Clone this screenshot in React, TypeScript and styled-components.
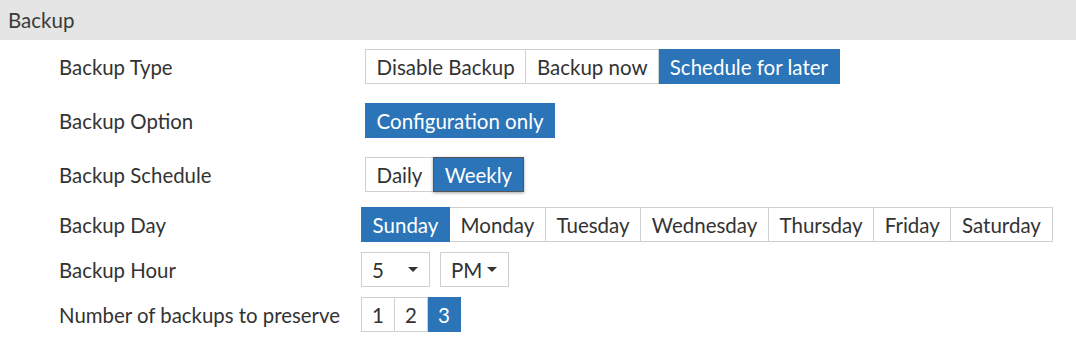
import React from 'react';
import styled, { createGlobalStyle } from 'styled-components';

const GlobalStyle = createGlobalStyle`
  body {
    margin: 0;
    background: #fff;
    font-family: Lato, "Open Sans", sans-serif;
    color: #333;
  }
`;

const Header = styled.div`
  height: 40px;
  line-height: 40px;
  padding-left: 8px;
  background: #e5e5e5;
  font-size: 20.5px;
  color: #3a3a3a;
`;

const Form = styled.div`
  padding: 5px 0 0 59px;
`;

const Row = styled.div`
  display: flex;
  align-items: center;
  margin-bottom: 10px;
`;

const Label = styled.div`
  width: 302px;
  font-size: 20.4px;
  color: #333;
`;

const Group = styled.div<{ inset?: boolean }>`
  display: flex;
  margin: ${({ inset }) => (inset ? '4px 4px 5px' : '0')};
`;

const Option = styled.div<{ active?: boolean; focused?: boolean }>`
  height: 35px;
  box-sizing: border-box;
  padding: 0 10.6px;
  display: flex;
  align-items: center;
  font-size: 20.5px;
  color: #333;
  background: #fff;
  border: 1px solid #d0d0d0;
  border-left-width: 0;
  white-space: nowrap;

  &:first-child {
    border-left-width: 1px;
  }

  ${({ active }) => active && `
    background: #2b74b8;
    border-color: #2b74b8;
    color: #fff;
  `}

  ${({ focused }) => focused && `
    border-color: #555;
    border-left-width: 1px;
    margin-left: -1px;
    box-shadow: 0 1px 3px rgba(0, 0, 0, 0.35);
  `}
`;

const Selects = styled.div`
  display: flex;
  gap: 10px;
`;

const Select = styled.div`
  width: 69px;
  height: 35px;
  box-sizing: border-box;
  border: 1px solid #d0d0d0;
  display: flex;
  align-items: center;
  justify-content: space-between;
  padding: 0 11px 0 10px;
  font-size: 20.5px;
  color: #333;
`;

const Caret = styled.span`
  width: 0;
  height: 0;
  border-left: 5px solid transparent;
  border-right: 5px solid transparent;
  border-top: 5px solid #333;
`;

const NumberOption = styled(Option)`
  padding: 0;
  width: 33px;
  justify-content: center;

  &:first-child {
    width: 34px;
  }
`;

const days = ['Sunday', 'Monday', 'Tuesday', 'Wednesday', 'Thursday', 'Friday', 'Saturday'];

const App = () => {
  return (
    <>
      <GlobalStyle />
      <Header>Backup</Header>
      <Form>
        <Row>
          <Label>Backup Type</Label>
          <Group inset>
            <Option>Disable Backup</Option>
            <Option>Backup now</Option>
            <Option active>Schedule for later</Option>
          </Group>
        </Row>
        <Row>
          <Label>Backup Option</Label>
          <Group inset>
            <Option active>Configuration only</Option>
          </Group>
        </Row>
        <Row>
          <Label>Backup Schedule</Label>
          <Group inset>
            <Option>Daily</Option>
            <Option active focused>Weekly</Option>
          </Group>
        </Row>
        <Row>
          <Label>Backup Day</Label>
          <Group>
            {days.map((day) => (
              <Option key={day} active={day === 'Sunday'}>{day}</Option>
            ))}
          </Group>
        </Row>
        <Row>
          <Label>Backup Hour</Label>
          <Selects>
            <Select>5<Caret /></Select>
            <Select>PM<Caret /></Select>
          </Selects>
        </Row>
        <Row>
          <Label>Number of backups to preserve</Label>
          <Group>
            {[1, 2, 3].map((n) => (
              <NumberOption key={n} active={n === 3}>{n}</NumberOption>
            ))}
          </Group>
        </Row>
      </Form>
    </>
  );
};

export default App;
